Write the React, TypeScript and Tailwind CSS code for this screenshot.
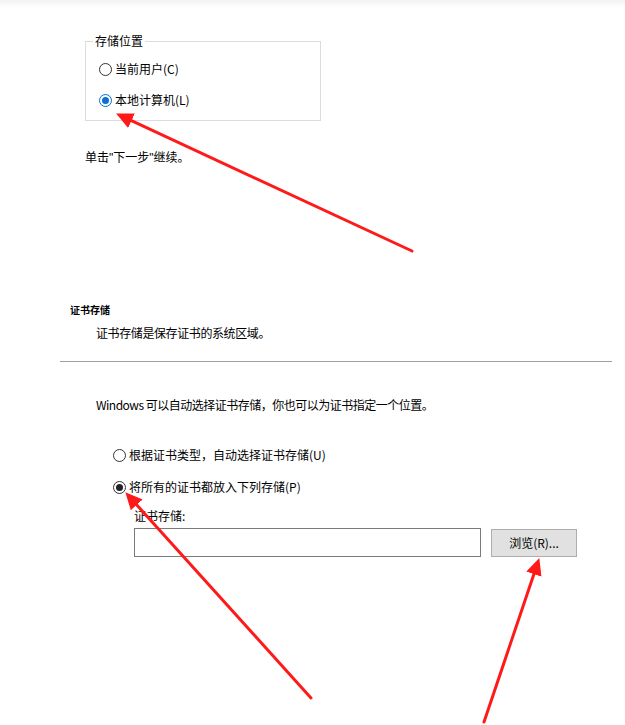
import React from 'react';

// 红色箭头：线段终点稍微缩短，让箭头头部盖住线端
type Arrow = { x1: number; y1: number; x2: number; y2: number };

const arrows: Arrow[] = [
  { x1: 412, y1: 251, x2: 117, y2: 114 },
  { x1: 311, y1: 698, x2: 126, y2: 493 },
  { x1: 484, y1: 722, x2: 539, y2: 559 },
];

function ArrowLine({ x1, y1, x2, y2 }: Arrow) {
  const len = Math.hypot(x2 - x1, y2 - y1);
  const ux = (x2 - x1) / len;
  const uy = (y2 - y1) / len;
  const ex = x2 - ux * 10;
  const ey = y2 - uy * 10;
  return (
    <line
      x1={x1}
      y1={y1}
      x2={ex}
      y2={ey}
      stroke="#ff1a1a"
      strokeWidth={3}
      strokeLinecap="round"
      markerEnd="url(#head)"
    />
  );
}

function Radio({ checked, accent }: { checked?: boolean; accent?: 'blue' | 'black' }) {
  const ring = checked && accent === 'blue' ? 'border-[#0a6fd0]' : 'border-[#333333]';
  const dot = accent === 'blue' ? 'bg-[#0a6fd0]' : 'bg-[#222222]';
  return (
    <span className={'w-[13px] h-[13px] rounded-full border bg-white flex items-center justify-center shrink-0 ' + ring}>
      {checked && <span className={'w-[7px] h-[7px] rounded-full ' + dot} />}
    </span>
  );
}

export default function App() {
  return (
    <div
      className="relative w-[625px] h-[725px] bg-white overflow-hidden text-[12px] leading-4 text-black"
      style={{ fontFamily: '"Noto Sans CJK SC", "Noto Sans", sans-serif' }}
    >
      {/* 顶部的浅灰条 */}
      <div className="h-2 bg-gradient-to-b from-[#f2f2f2] to-white" />

      <div className="flex flex-col">
        {/* 存储位置 */}
        <fieldset className="ml-[85px] mt-[26px] w-[236px] border border-[#dcdcdc] px-[13px] pt-[13px] pb-[12px]">
          <legend className="ml-[-6px] px-[2px] leading-[14px]">存储位置</legend>
          <label className="flex items-center gap-[3px]">
            <Radio />
            <span>当前用户(C)</span>
          </label>
          <label className="flex items-center gap-[3px] mt-[15px]">
            <Radio checked accent="blue" />
            <span>本地计算机(L)</span>
          </label>
        </fieldset>

        <p className="ml-[85px] mt-[28px] h-4 overflow-visible">
          单击<span className="font-['Liberation_Sans']">"</span>下一步<span className="font-['Liberation_Sans']">"</span>继续。
        </p>

        {/* 证书存储 */}
        <h3 className="ml-[70px] mt-[138px] text-[10px] leading-[14px] font-bold">证书存储</h3>
        <p className="ml-[96px] mt-[8px] tracking-[-0.4px]">证书存储是保存证书的系统区域。</p>

        <div className="ml-[60px] mt-[20px] w-[552px] h-px bg-[#a0a0a0]" />

        <p className="ml-[96px] mt-[35px] tracking-[-0.5px]">Windows 可以自动选择证书存储，你也可以为证书指定一个位置。</p>

        <label className="ml-[113px] mt-[34px] flex items-center gap-[3px]">
          <Radio />
          <span>根据证书类型，自动选择证书存储(U)</span>
        </label>
        <label className="ml-[113px] mt-[16px] flex items-center gap-[3px]">
          <Radio checked accent="black" />
          <span>将所有的证书都放入下列存储(P)</span>
        </label>

        <div className="ml-[134px] mt-[13px]">证书存储:</div>
        <div className="ml-[134px] mt-[4px] flex items-start gap-[10px]">
          <div className="w-[347px] h-[29px] border border-[#7a7a7a] bg-white" />
          <button className="mt-px w-[86px] h-[28px] border border-[#adadad] bg-[#e1e1e1] text-[12px] text-black">
            浏览(R)...
          </button>
        </div>
      </div>

      {/* 标注箭头 */}
      <svg className="absolute inset-0 pointer-events-none" width={625} height={725}>
        <defs>
          <marker id="head" markerUnits="userSpaceOnUse" markerWidth={18} markerHeight={16} refX={6} refY={8} orient="auto">
            <path d="M0,0 L17,8 L0,16 Z" fill="#ff1a1a" />
          </marker>
        </defs>
        {arrows.map((a, i) => (
          <ArrowLine key={i} {...a} />
        ))}
      </svg>
    </div>
  );
}
